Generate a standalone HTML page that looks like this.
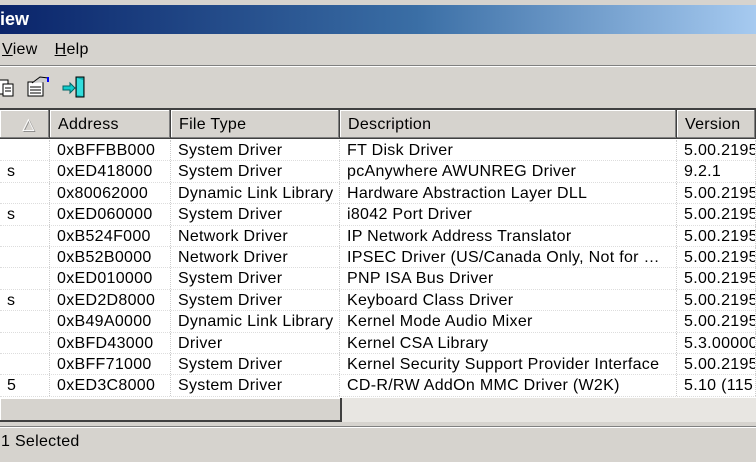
<!DOCTYPE html>
<html><head><style>
*{margin:0;padding:0;box-sizing:border-box}
body{width:756px;height:462px;overflow:hidden;background:#d6d3ce;font-family:"Liberation Sans",sans-serif;font-size:16px;letter-spacing:0.3px;color:#000;position:relative}
.abs{position:absolute}
#title{left:0;top:5px;width:756px;height:29px;background:linear-gradient(90deg,#0a246a 0%,#3a6ea5 55%,#a6caf0 100%);color:#fff;font-weight:bold;font-size:18px;line-height:29px;letter-spacing:0}
#menu{top:37px;left:0;width:756px;height:26px;line-height:26px}
#tb{top:66px;left:0;width:756px;height:38px;border-top:1px solid #fff;box-shadow:0 -1px 0 #808080}
#list{top:108px;left:0;width:756px;height:290px;background:#fff;border-top:2px solid #404040}
.hdr{top:0;height:29px;background:#d6d3ce;border-right:1px solid #404040;border-bottom:1px solid #404040;box-shadow:inset -1px -1px 0 #808080,inset 1px 1px 0 #fff;line-height:29px;padding-left:8px}
.row{position:absolute;left:0;width:756px;height:21.4px;line-height:22px;border-bottom:1px dotted #ddd}
.c{position:absolute;top:0;height:100%;padding-left:7px;white-space:nowrap;overflow:hidden;border-right:1px dotted #ccc}
#hs{top:398px;left:0;width:342px;height:24px;background:#d6d3ce;border-right:2px solid #404040;border-bottom:2px solid #404040;box-shadow:inset 1px 1px 0 #fff}
#hs2{top:398px;left:342px;width:414px;height:24px;background:#e8e6e2}
#status{top:426px;left:0;width:756px;height:30px;line-height:30px;border-top:1px solid #808080;box-shadow:inset 0 1px 0 #fff}
</style></head><body>
<div class="abs" style="top:0;left:0;width:756px;height:5px;background:#d6d3ce"></div>
<div id="title" class="abs">iew</div>
<div id="menu" class="abs"><span style="margin-left:2px"><u>V</u>iew</span><span style="margin-left:17px"><u>H</u>elp</span></div>
<div id="tb" class="abs">
<svg width="100" height="36" style="position:absolute;left:0;top:2px">
<rect x="-2" y="11" width="10" height="14" fill="#fff" stroke="#000"/><rect x="3" y="15" width="10" height="12" fill="#fff" stroke="#000"/><line x1="5" y1="19" x2="11" y2="19" stroke="#000"/><line x1="5" y1="22" x2="11" y2="22" stroke="#000"/>
<rect x="28" y="13" width="15" height="14" fill="#fff" stroke="#000"/><line x1="30" y1="18" x2="41" y2="18" stroke="#000"/><line x1="30" y1="21" x2="41" y2="21" stroke="#000"/><line x1="30" y1="24" x2="41" y2="24" stroke="#000"/><path d="M32 14 L40 8 L48 9 L48 13" fill="#ccc" stroke="#000"/><rect x="47" y="8" width="2" height="5" fill="#00f"/>
<rect x="76" y="8" width="8" height="20" fill="#1aa" stroke="#000"/><path d="M77 9 L83 11 L83 27 L77 26Z" fill="#3dd"/><path d="M63 17 L70 17 L70 14 L75 19 L70 24 L70 21 L63 21Z" fill="#1cc" stroke="#066"/>
</svg></div>
<div id="list" class="abs">
<div class="hdr abs" style="left:0;width:50px;text-align:center;color:#fff;text-shadow:1px 1px #888">△</div>
<div class="hdr abs" style="left:50px;width:121px">Address</div>
<div class="hdr abs" style="left:171px;width:169px">File Type</div>
<div class="hdr abs" style="left:340px;width:337px">Description</div>
<div class="hdr abs" style="left:677px;width:79px">Version</div>
<div style="position:absolute;top:30px;left:0;width:756px">
<div class="row" style="top:0"><div class="c" style="left:0;width:50px"></div><div class="c" style="left:50px;width:121px">0xBFFBB000</div><div class="c" style="left:171px;width:169px">System Driver</div><div class="c" style="left:340px;width:337px">FT Disk Driver</div><div class="c" style="left:677px;width:79px">5.00.2195</div></div>
<div class="row" style="top:21.4px"><div class="c" style="left:0;width:50px">s</div><div class="c" style="left:50px;width:121px">0xED418000</div><div class="c" style="left:171px;width:169px">System Driver</div><div class="c" style="left:340px;width:337px">pcAnywhere AWUNREG Driver</div><div class="c" style="left:677px;width:79px">9.2.1</div></div>
<div class="row" style="top:42.8px"><div class="c" style="left:0;width:50px"></div><div class="c" style="left:50px;width:121px">0x80062000</div><div class="c" style="left:171px;width:169px">Dynamic Link Library</div><div class="c" style="left:340px;width:337px">Hardware Abstraction Layer DLL</div><div class="c" style="left:677px;width:79px">5.00.2195</div></div>
<div class="row" style="top:64.2px"><div class="c" style="left:0;width:50px">s</div><div class="c" style="left:50px;width:121px">0xED060000</div><div class="c" style="left:171px;width:169px">System Driver</div><div class="c" style="left:340px;width:337px">i8042 Port Driver</div><div class="c" style="left:677px;width:79px">5.00.2195</div></div>
<div class="row" style="top:85.6px"><div class="c" style="left:0;width:50px"></div><div class="c" style="left:50px;width:121px">0xB524F000</div><div class="c" style="left:171px;width:169px">Network Driver</div><div class="c" style="left:340px;width:337px">IP Network Address Translator</div><div class="c" style="left:677px;width:79px">5.00.2195</div></div>
<div class="row" style="top:107px"><div class="c" style="left:0;width:50px"></div><div class="c" style="left:50px;width:121px">0xB52B0000</div><div class="c" style="left:171px;width:169px">Network Driver</div><div class="c" style="left:340px;width:337px">IPSEC Driver (US/Canada Only, Not for …</div><div class="c" style="left:677px;width:79px">5.00.2195</div></div>
<div class="row" style="top:128.4px"><div class="c" style="left:0;width:50px"></div><div class="c" style="left:50px;width:121px">0xED010000</div><div class="c" style="left:171px;width:169px">System Driver</div><div class="c" style="left:340px;width:337px">PNP ISA Bus Driver</div><div class="c" style="left:677px;width:79px">5.00.2195</div></div>
<div class="row" style="top:149.8px"><div class="c" style="left:0;width:50px">s</div><div class="c" style="left:50px;width:121px">0xED2D8000</div><div class="c" style="left:171px;width:169px">System Driver</div><div class="c" style="left:340px;width:337px">Keyboard Class Driver</div><div class="c" style="left:677px;width:79px">5.00.2195</div></div>
<div class="row" style="top:171.2px"><div class="c" style="left:0;width:50px"></div><div class="c" style="left:50px;width:121px">0xB49A0000</div><div class="c" style="left:171px;width:169px">Dynamic Link Library</div><div class="c" style="left:340px;width:337px">Kernel Mode Audio Mixer</div><div class="c" style="left:677px;width:79px">5.00.2195</div></div>
<div class="row" style="top:192.6px"><div class="c" style="left:0;width:50px"></div><div class="c" style="left:50px;width:121px">0xBFD43000</div><div class="c" style="left:171px;width:169px">Driver</div><div class="c" style="left:340px;width:337px">Kernel CSA Library</div><div class="c" style="left:677px;width:79px">5.3.00000</div></div>
<div class="row" style="top:214px"><div class="c" style="left:0;width:50px"></div><div class="c" style="left:50px;width:121px">0xBFF71000</div><div class="c" style="left:171px;width:169px">System Driver</div><div class="c" style="left:340px;width:337px">Kernel Security Support Provider Interface</div><div class="c" style="left:677px;width:79px">5.00.2195</div></div>
<div class="row" style="top:235.4px"><div class="c" style="left:0;width:50px">5</div><div class="c" style="left:50px;width:121px">0xED3C8000</div><div class="c" style="left:171px;width:169px">System Driver</div><div class="c" style="left:340px;width:337px">CD-R/RW AddOn MMC Driver (W2K)</div><div class="c" style="left:677px;width:79px">5.10 (115</div></div>
</div></div>
<div id="hs" class="abs"></div><div id="hs2" class="abs"></div>
<div id="status" class="abs"><span style="margin-left:1px">1 Selected</span></div>
</body></html>
